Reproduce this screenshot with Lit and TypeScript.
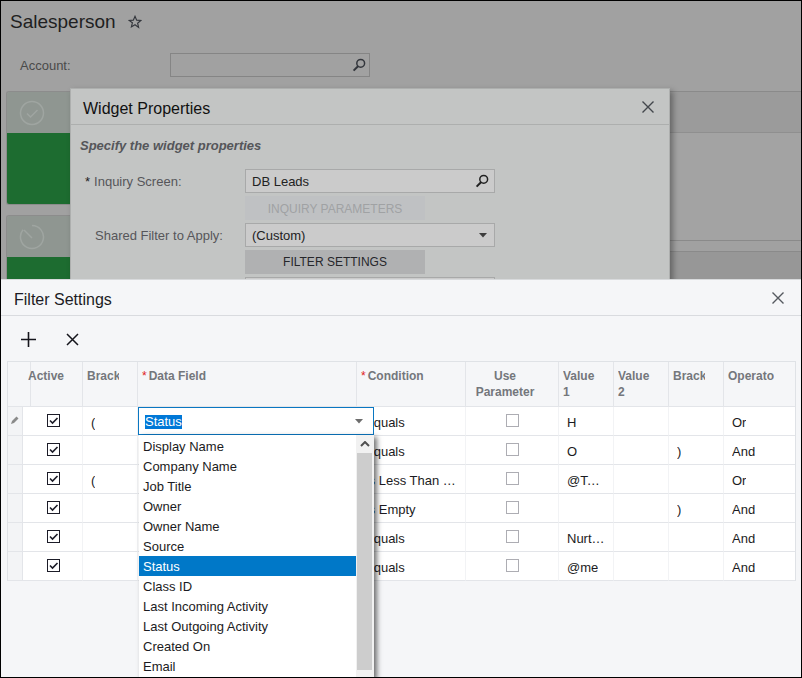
import { LitElement, html, css, svg, nothing, type TemplateResult } from "lit";
import { customElement } from "lit/decorators.js";

type Row = {
  active: boolean;
  open?: string;
  condition: string;
  value1?: string;
  close?: string;
  operator: string;
  editing?: boolean;
};

const ROWS: Row[] = [
  { active: true, open: "(", condition: "Equals", value1: "H", operator: "Or", editing: true },
  { active: true, condition: "Equals", value1: "O", close: ")", operator: "And" },
  { active: true, open: "(", condition: "Is Less Than or Equal", value1: "@Today", operator: "Or" },
  { active: true, condition: "Is Empty", close: ")", operator: "And" },
  { active: true, condition: "Equals", value1: "Nurturing", operator: "And" },
  { active: true, condition: "Equals", value1: "@me", operator: "And" },
];

const FIELDS = [
  "Display Name",
  "Company Name",
  "Job Title",
  "Owner",
  "Owner Name",
  "Source",
  "Status",
  "Class ID",
  "Last Incoming Activity",
  "Last Outgoing Activity",
  "Created On",
  "Email",
];

const searchIcon = svg`<svg class="search" viewBox="0 0 14 14" fill="none" stroke="currentColor" stroke-width="1.5"><circle cx="8.7" cy="5.3" r="3.9"/><path d="M6 8.2 1.6 12.6" stroke-width="2"/></svg>`;
const caret = svg`<svg class="caret" viewBox="0 0 8 5"><path d="M0 0h8L4 4.6z" fill="currentColor"/></svg>`;
const closeIcon = svg`<svg class="close" viewBox="0 0 12 12" fill="none" stroke="currentColor" stroke-width="1.4"><path d="M.5.5l11 11M11.5.5l-11 11"/></svg>`;

@customElement("app-root")
export class AppRoot extends LitElement {
  static styles = css`
    :host {
      display: block;
      position: relative;
      box-sizing: border-box;
      width: 802px;
      height: 678px;
      overflow: hidden;
      border: 1px solid #000;
      background: #a1a1a1;
      font-family: "Liberation Sans", Arial, sans-serif;
      font-size: 13px;
      color: #1b1b22;
    }
    * {
      box-sizing: border-box;
    }

    /* dimmed page behind the dialogs */
    .page-title {
      display: flex;
      align-items: center;
      gap: 12px;
      height: 42px;
      padding-left: 9px;
      font-size: 19px;
      color: #1f1f22;
    }
    .star {
      width: 14px;
      height: 14px;
      color: #33363c;
    }
    .account {
      display: flex;
      align-items: center;
      height: 24px;
      margin-top: 10px;
      padding-left: 19px;
      color: #4a4a4a;
    }
    .account label {
      width: 150px;
    }
    .account .box {
      display: flex;
      align-items: center;
      justify-content: flex-end;
      width: 200px;
      height: 24px;
      padding-right: 3px;
      border: 1px solid #858585;
      color: #33363c;
    }
    .board {
      display: flex;
      height: 300px;
      margin-top: 14px;
      padding-left: 5px;
    }
    .tiles {
      display: flex;
      flex-direction: column;
      gap: 10px;
      width: 120px;
      flex: none;
    }
    .tile {
      height: 114px;
      flex: none;
      display: flex;
      flex-direction: column;
      border: 1px solid #8c8c8c;
      border-right: 0;
      border-radius: 3px 0 0 3px;
      overflow: hidden;
    }
    .tile-head {
      height: 41px;
      flex: none;
      background: #8f9691;
      color: #9fa5a1;
      padding: 8px 0 0 12px;
    }
    .tile-head svg {
      display: block;
      width: 26px;
      height: 26px;
    }
    .tile-body {
      flex: 1;
      background: #1d6c30;
    }
    .panels {
      flex: 1;
      display: flex;
      flex-direction: column;
      gap: 10px;
    }
    .panel {
      height: 150px;
      flex: none;
      border-top: 1px solid #8a8a8a;
      border-bottom: 1px solid #8a8a8a;
      background: #a3a3a3;
    }
    .panel-head {
      height: 41px;
      background: #9b9b9b;
      border-bottom: 1px solid #8f8f8f;
    }
    .panel.dark {
      background: #979797;
    }

    /* Widget Properties */
    .widget {
      position: absolute;
      left: 69px;
      top: 87px;
      width: 600px;
      height: 210px;
      background: #c3c5c4;
      border: 1px solid #adafae;
      box-shadow: 3px 3px 6px rgba(0, 0, 0, 0.35);
    }
    .dialog-head {
      display: flex;
      align-items: center;
      justify-content: space-between;
      font-size: 16px;
    }
    .dialog-head .label {
      padding-top: 4px;
    }
    .widget .dialog-head {
      height: 36px;
      padding: 0 15px 0 12px;
      border-bottom: 1px solid #adafae;
      color: #111;
    }
    .close {
      width: 12px;
      height: 12px;
      color: #43474c;
    }
    .widget-body {
      padding: 11px 0 0 9px;
    }
    .hint {
      height: 20px;
      line-height: 20px;
      font-size: 13px;
      font-weight: bold;
      font-style: italic;
      color: #55565a;
      margin-bottom: 13px;
    }
    .fields {
      display: flex;
      flex-direction: column;
      gap: 3px;
    }
    .field {
      display: flex;
      align-items: center;
      height: 24px;
    }
    .field-label {
      width: 165px;
      flex: none;
      padding-left: 15px;
      color: #56565a;
    }
    .field-label.req {
      padding-left: 5px;
    }
    .field-label.req i {
      font-style: normal;
      color: #222;
      margin-right: 4px;
    }
    .input {
      display: flex;
      align-items: center;
      justify-content: space-between;
      width: 250px;
      height: 24px;
      padding: 0 5px 0 6px;
      background: #cbcbcb;
      border: 1px solid #a8a9a9;
      color: #222;
    }
    .input .caret {
      color: #3d3d3d;
      margin-right: 2px;
    }
    .search {
      width: 14px;
      height: 14px;
    }
    .caret {
      width: 8px;
      height: 5px;
    }
    .btn {
      display: flex;
      align-items: center;
      justify-content: center;
      width: 180px;
      height: 24px;
      font-size: 12px;
      background: #b0b1b2;
      color: #26272b;
    }
    .btn.off {
      padding-top: 1px;
      background: #bfc1c3;
      color: #a0a2a4;
    }

    /* Filter Settings */
    .filter {
      position: absolute;
      left: 0;
      top: 278px;
      right: 0;
      bottom: 0;
      background: #f5f6f8;
      border-top: 1px solid #d8dadc;
    }
    .filter .dialog-head {
      height: 36px;
      padding: 0 17px 0 13px;
      border-bottom: 1px solid #d9dbdf;
      color: #1c1c24;
    }
    .filter .close {
      color: #55595f;
    }
    .toolbar {
      display: flex;
      align-items: center;
      gap: 30px;
      height: 45px;
      padding: 2px 0 0 20px;
      color: #15151c;
    }
    .toolbar svg {
      display: block;
    }
    .table {
      display: grid;
      grid-template-columns: 15px 60px 55px 219px 109px 93px 55px 55px 55px 71px;
      grid-template-rows: 45px;
      grid-auto-rows: 29px;
      width: 789px;
      margin-left: 6px;
      border: 1px solid #dfe2e6;
      border-width: 1px 1px 0 1px;
    }
    .th {
      height: 45px;
      padding: 6px 18px 0 4px;
      border-right: 1px solid #e3e5e9;
      border-bottom: 1px solid #e3e5e9;
      font-size: 12px;
      line-height: 16px;
      font-weight: bold;
      color: #74777c;
    }
    .th div {
      overflow: hidden;
      height: 32px;
    }
    .th.active {
      padding: 6px 14px 0 5px;
    }
    .th.center {
      text-align: center;
    }
    .th.last {
      padding-right: 21px;
    }
    .th.last,
    .td.last {
      border-right: 0;
    }
    .th b {
      color: #e02020;
      font-weight: normal;
      margin-right: 2px;
    }
    .td {
      position: relative;
      display: flex;
      align-items: center;
      min-width: 0;
      padding: 0 8px;
      background: #fff;
      border-right: 1px solid #f2f3f5;
      border-bottom: 1px solid #e3e5e9;
      white-space: nowrap;
    }
    .td span {
      overflow: hidden;
      text-overflow: ellipsis;
    }
    .td.gutter {
      padding: 0 0 3px 2px;
      background: #f3f4f6;
      border-right-color: #e3e5e9;
      color: #8a8a8a;
    }
    .td.check {
      justify-content: center;
      padding: 0 0 2px 1px;
    }
    .check-box {
      display: block;
      width: 13px;
      height: 13px;
      background: #fff;
      border: 1px solid #1c1c28;
    }
    .check-box svg {
      display: block;
    }
    .check-box.empty {
      border-color: #adadb3;
    }
    .td.shift {
      padding-top: 2px;
    }

    /* open combo over the Data Field column */
    .combo {
      position: absolute;
      left: 0;
      top: 0;
      width: 236px;
      z-index: 2;
    }
    .combo-input {
      display: flex;
      align-items: center;
      justify-content: space-between;
      height: 28px;
      padding: 1px 10px 0 6px;
      background: #fff;
      border: 1px solid #0a77c2;
    }
    .combo-input em {
      font-style: normal;
      line-height: 14px;
      background: #0078d7;
      color: #fff;
    }
    .combo-input .caret {
      color: #6d6d6d;
    }
    .combo-list {
      display: flex;
      width: 235px;
      height: 243px;
      margin-left: 1px;
      background: #fff;
      overflow: hidden;
      box-shadow: 3px 2px 5px rgba(0, 0, 0, 0.55);
    }
    .items {
      width: 217px;
      flex: none;
      padding-top: 1px;
    }
    .item {
      height: 20px;
      line-height: 22px;
      padding-left: 4px;
      color: #1b1b22;
    }
    .item.selected {
      background: #0078c8;
      color: #fff;
    }
    .scroll {
      width: 18px;
      flex: none;
      padding-left: 1px;
      background: #f1f1f1;
    }
    .scroll-up {
      display: flex;
      align-items: center;
      justify-content: center;
      width: 15px;
      height: 18px;
      color: #505050;
    }
    .thumb {
      width: 15px;
      height: 217px;
      background: #cdcdcd;
    }
  `;

  private checkbox(on: boolean): TemplateResult {
    return html`<i class="check-box ${on ? "" : "empty"}">
      ${on
        ? svg`<svg width="11" height="11" viewBox="0 0 11 11" fill="none" stroke="#1c1c28" stroke-width="1.6"><path d="M2 5.5l2.5 2.5L9.5 3"/></svg>`
        : nothing}
    </i>`;
  }

  private renderCombo(): TemplateResult {
    return html`<div class="combo">
      <div class="combo-input"><em>Status</em>${caret}</div>
      <div class="combo-list">
        <div class="items">
          ${FIELDS.map(
            (f) => html`<div class="item ${f === "Status" ? "selected" : ""}">${f}</div>`,
          )}
        </div>
        <div class="scroll">
          <div class="scroll-up">
            <svg width="10" height="6" viewBox="0 0 10 6" fill="none" stroke="currentColor" stroke-width="2"><path d="M1 5l4-4 4 4"/></svg>
          </div>
          <div class="thumb"></div>
        </div>
      </div>
    </div>`;
  }

  private renderRow(r: Row): TemplateResult {
    return html`
      <div class="td gutter">
        ${r.editing
          ? svg`<svg width="10" height="10" viewBox="0 0 10 10"><path d="M1 9l1-3 4.5-4.5 2 2L4 8z" fill="currentColor"/></svg>`
          : nothing}
      </div>
      <div class="td check">${this.checkbox(r.active)}</div>
      <div class="td shift"><span>${r.open ?? ""}</span></div>
      <div class="td">${r.editing ? this.renderCombo() : nothing}</div>
      <div class="td shift"><span>${r.condition}</span></div>
      <div class="td check">${this.checkbox(false)}</div>
      <div class="td shift"><span>${r.value1 ?? ""}</span></div>
      <div class="td"></div>
      <div class="td shift"><span>${r.close ?? ""}</span></div>
      <div class="td shift last"><span>${r.operator}</span></div>
    `;
  }

  render(): TemplateResult {
    return html`
      <div class="page-title">
        Salesperson
        <svg class="star" viewBox="0 0 16 16" fill="none" stroke="currentColor" stroke-width="1.3"><path d="M8 1.5l1.9 4.4 4.7.4-3.6 3.1 1.1 4.7L8 11.1l-4.1 2.5L5 8.9 1.4 6.3l4.7-.4z"/></svg>
      </div>
      <div class="account">
        <label>Account:</label>
        <div class="box">${searchIcon}</div>
      </div>
      <div class="board">
        <div class="tiles">
          <div class="tile">
            <div class="tile-head">
              <svg viewBox="0 0 26 26" fill="none" stroke="currentColor" stroke-width="1.5"><circle cx="13" cy="13" r="11.5"/><path d="M8 13.5l3.5 3.5 7-7"/></svg>
            </div>
            <div class="tile-body"></div>
          </div>
          <div class="tile">
            <div class="tile-head">
              <svg viewBox="0 0 26 26" fill="none" stroke="currentColor" stroke-width="1.5"><path d="M13 1.5A11.5 11.5 0 1 1 4 5.8M5 6l8 8"/></svg>
            </div>
            <div class="tile-body"></div>
          </div>
        </div>
        <div class="panels">
          <div class="panel"><div class="panel-head"></div></div>
          <div class="panel dark"></div>
        </div>
      </div>

      <section class="widget">
        <div class="dialog-head"><span class="label">Widget Properties</span> ${closeIcon}</div>
        <div class="widget-body">
          <div class="hint">Specify the widget properties</div>
          <div class="fields">
            <div class="field">
              <div class="field-label req"><i>*</i>Inquiry Screen:</div>
              <div class="input">DB Leads ${searchIcon}</div>
            </div>
            <div class="field">
              <div class="field-label"></div>
              <div class="btn off">INQUIRY PARAMETERS</div>
            </div>
            <div class="field">
              <div class="field-label">Shared Filter to Apply:</div>
              <div class="input">(Custom) ${caret}</div>
            </div>
            <div class="field">
              <div class="field-label"></div>
              <div class="btn">FILTER SETTINGS</div>
            </div>
            <div class="field">
              <div class="field-label"></div>
              <div class="input"></div>
            </div>
          </div>
        </div>
      </section>

      <section class="filter">
        <div class="dialog-head"><span class="label">Filter Settings</span> ${closeIcon}</div>
        <div class="toolbar">
          <svg width="15" height="15" viewBox="0 0 15 15" stroke="currentColor" stroke-width="1.6"><path d="M7.5 0v15M0 7.5h15"/></svg>
          <svg width="13" height="13" viewBox="0 0 13 13" stroke="currentColor" stroke-width="1.5"><path d="M1 1l11 11M12 1L1 12"/></svg>
        </div>
        <div class="table">
          <div class="th"></div>
          <div class="th active"><div>Active</div></div>
          <div class="th"><div>Brackets</div></div>
          <div class="th"><div><b>*</b>Data Field</div></div>
          <div class="th"><div><b>*</b>Condition</div></div>
          <div class="th center"><div>Use Parameter</div></div>
          <div class="th"><div>Value 1</div></div>
          <div class="th"><div>Value 2</div></div>
          <div class="th"><div>Brackets</div></div>
          <div class="th last"><div>Operator</div></div>
          ${ROWS.map((r) => this.renderRow(r))}
        </div>
      </section>
    `;
  }
}

declare global {
  interface HTMLElementTagNameMap {
    "app-root": AppRoot;
  }
}
